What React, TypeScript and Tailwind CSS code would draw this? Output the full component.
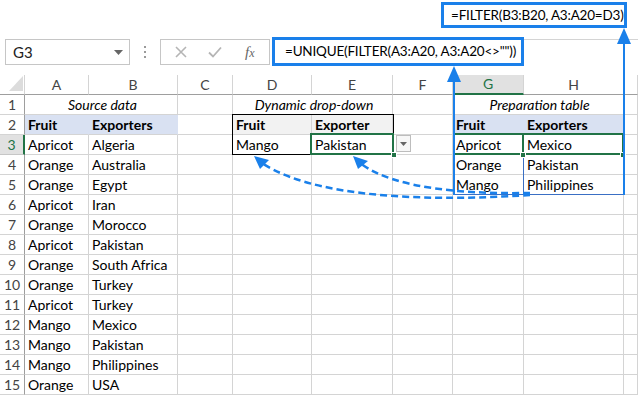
import React from "react";

const FONT = { fontFamily: "Lato, 'Open Sans', sans-serif" };

const COLS =
  "grid grid-cols-[25px_64px_89px_55px_79px_81px_60px_71px_100px_14px]";

type Row = { n: number; a?: string; b?: string; d?: string; e?: string; g?: string; h?: string };

const rows: Row[] = [
  { n: 3, a: "Apricot", b: "Algeria", d: "Mango", e: "Pakistan", g: "Apricot", h: "Mexico" },
  { n: 4, a: "Orange", b: "Australia", g: "Orange", h: "Pakistan" },
  { n: 5, a: "Orange", b: "Egypt", g: "Mango", h: "Philippines" },
  { n: 6, a: "Apricot", b: "Iran" },
  { n: 7, a: "Orange", b: "Morocco" },
  { n: 8, a: "Apricot", b: "Pakistan" },
  { n: 9, a: "Orange", b: "South Africa" },
  { n: 10, a: "Orange", b: "Turkey" },
  { n: 11, a: "Apricot", b: "Turkey" },
  { n: 12, a: "Mango", b: "Mexico" },
  { n: 13, a: "Mango", b: "Pakistan" },
  { n: 14, a: "Mango", b: "Philippines" },
  { n: 15, a: "Orange", b: "USA" },
];

function Cell({ children, className = "" }: { children?: React.ReactNode; className?: string }) {
  return (
    <div
      className={`flex items-center h-5 pl-[3px] pt-[1px] border-r border-b border-[#d4d4d4] text-[14px] text-black whitespace-nowrap overflow-visible leading-none ${className}`}
    >
      {children}
    </div>
  );
}

function RowHead({ n, active = false }: { n: number; active?: boolean }) {
  return (
    <div
      className={`flex items-center justify-center h-5 border-b border-r text-[14px] leading-none ${
        active
          ? "bg-[#e1e1e1] text-[#217346] border-r-2 border-r-[#217346] border-b-[#c6c6c6]"
          : "text-[#444] border-b-[#d4d4d4] border-r-[#9e9e9e]"
      }`}
    >
      {n}
    </div>
  );
}

function ColHead({ label, active = false }: { label: string; active?: boolean }) {
  return (
    <div
      className={`flex items-center justify-center h-5 border-r border-[#d4d4d4] text-[14px] leading-none ${
        active ? "bg-[#e1e1e1] text-[#217346] border-b-2 border-b-[#217346]" : "text-[#444] border-b border-b-[#9e9e9e]"
      }`}
    >
      {label}
    </div>
  );
}

export default function App() {
  return (
    <div className="relative w-[638px] h-[395px] bg-white overflow-hidden" style={FONT}>
      {/* Formula bar area */}
      <div className="h-[39px]" />
      <div className="flex h-[26px] items-stretch">
        <div className="ml-[5px] w-[125px] border border-[#c6c6c6] flex items-center justify-between pl-[7px] pr-[6px] text-[15px] text-[#222]">
          <span>G3</span>
          <svg width="9" height="5" viewBox="0 0 9 5">
            <path d="M0 0 H9 L4.5 5 Z" fill="#666" />
          </svg>
        </div>
        <div className="w-[30px] flex flex-col items-center justify-center gap-[3px]">
          <span className="w-[2px] h-[2px] bg-[#9a9a9a]" />
          <span className="w-[2px] h-[2px] bg-[#9a9a9a]" />
          <span className="w-[2px] h-[2px] bg-[#9a9a9a]" />
        </div>
        <div className="w-[110px] border border-[#c6c6c6] flex items-center">
          <svg className="ml-[14px]" width="12" height="12" viewBox="0 0 12 12">
            <path d="M1 1 L11 11 M11 1 L1 11" stroke="#b5b5b5" strokeWidth="1.6" />
          </svg>
          <svg className="ml-[21px]" width="14" height="12" viewBox="0 0 14 12">
            <path d="M1 6.5 L5 10.5 L13 1.5" stroke="#b5b5b5" strokeWidth="1.8" fill="none" />
          </svg>
          <span
            className="ml-[23px] text-[15px] italic text-[#666] leading-none"
            style={{ fontFamily: "'Liberation Serif', serif" }}
          >
            f<span className="text-[12px]">x</span>
          </span>
        </div>
        <div className="flex-1 ml-[3px] flex flex-col">
          <div className="h-0 border-t border-[#d4d4d4] ml-[250px]" />
        </div>
      </div>
      <div className="h-[10px]" />

      {/* Column headers */}
      <div className={COLS}>
        <div className="relative h-5 border-r border-b border-[#9e9e9e] border-r-[#d4d4d4]">
          <svg className="absolute left-[9px] top-[1px]" width="14" height="15" viewBox="0 0 14 15">
            <path d="M14 0 V15 H0 Z" fill="#dcdcdc" />
          </svg>
        </div>
        <ColHead label="A" />
        <ColHead label="B" />
        <ColHead label="C" />
        <ColHead label="D" />
        <ColHead label="E" />
        <ColHead label="F" />
        <ColHead label="G" active />
        <ColHead label="H" />
        <ColHead label="" />
      </div>

      {/* Row 1 */}
      <div className={COLS}>
        <RowHead n={1} />
        <Cell className="col-span-2 justify-center pl-0 italic">Source data</Cell>
        <Cell />
        <Cell className="col-span-2 justify-center pl-0 italic">Dynamic drop-down</Cell>
        <Cell />
        <Cell className="col-span-2 justify-center pl-0 italic">Preparation table</Cell>
        <Cell />
      </div>

      {/* Row 2 */}
      <div className={COLS}>
        <RowHead n={2} />
        <Cell className="bg-[#d9e1f2] border-r-[#d9e1f2] font-bold">Fruit</Cell>
        <Cell className="bg-[#d9e1f2] border-r-[#d9e1f2] font-bold">Exporters</Cell>
        <Cell />
        <Cell className="bg-[#f2f2f2] font-bold">Fruit</Cell>
        <Cell className="bg-[#f2f2f2] font-bold">Exporter</Cell>
        <Cell />
        <Cell className="bg-[#d9e1f2] border-r-[#d9e1f2] font-bold">Fruit</Cell>
        <Cell className="bg-[#d9e1f2] font-bold">Exporters</Cell>
        <Cell />
      </div>

      {/* Rows 3-15 */}
      {rows.map((r) => (
        <div key={r.n} className={COLS}>
          <RowHead n={r.n} active={r.n === 3} />
          <Cell>{r.a}</Cell>
          <Cell>{r.b}</Cell>
          <Cell />
          <Cell>{r.d}</Cell>
          <Cell>{r.e}</Cell>
          <Cell />
          <Cell>{r.g}</Cell>
          <Cell>{r.h}</Cell>
          <Cell />
        </div>
      ))}

      {/* Overlays: borders & selections */}
      <div className="absolute left-[232px] top-[114px] w-[162px] h-[41px] border border-black pointer-events-none" />
      <div className="absolute left-[310px] top-[133px] w-[84px] h-[22px] border-2 border-[#217346] pointer-events-none" />
      <div className="absolute left-[391px] top-[152px] w-[6px] h-[6px] bg-[#217346] border border-white" />
      {/* dropdown button */}
      <div className="absolute left-[396px] top-[135px] w-[15px] h-[17px] border border-[#bdbdbd] bg-[#f7f7f7] flex items-center justify-center">
        <svg width="7" height="4" viewBox="0 0 7 4">
          <path d="M0 0 H7 L3.5 4 Z" fill="#666" />
        </svg>
      </div>

      {/* spill range blue border */}
      <div className="absolute left-[453px] top-[134px] w-[171px] h-[61px] border border-[#3a6fc4] pointer-events-none" />
      <div className="absolute left-[523px] top-[134px] w-px h-[61px] bg-[#3a6fc4] pointer-events-none" />
      {/* green selection G3:H3 */}
      <div className="absolute left-[453px] top-[133px] w-[171px] h-[22px] border-2 border-[#217346] pointer-events-none" />
      <div className="absolute left-[522px] top-[133px] w-[2px] h-[22px] bg-[#217346] pointer-events-none" />
      <div className="absolute left-[520px] top-[152px] w-[6px] h-[6px] bg-[#217346] border border-white" />
      <div className="absolute left-[620px] top-[152px] w-[6px] h-[6px] bg-[#217346] border border-white" />

      {/* Formula callout boxes */}
      <div className="absolute left-[272px] top-[37px] w-[252px] h-[29px] border-[3px] border-[#1a80ea] bg-white flex items-center pl-[10px] text-[13.5px] tracking-[-0.2px] text-black whitespace-nowrap">
        =UNIQUE(FILTER(A3:A20, A3:A20&lt;&gt;""))
      </div>
      <div className="absolute left-[441px] top-[2px] w-[186px] h-[26px] border-[3px] border-[#1a80ea] bg-white flex items-center pl-[7px] text-[13.5px] tracking-[-0.2px] text-black whitespace-nowrap">
        =FILTER(B3:B20, A3:A20=D3)
      </div>

      {/* Arrows */}
      <svg className="absolute left-0 top-0 pointer-events-none" width="638" height="395" viewBox="0 0 638 395">
        {/* solid vertical arrows */}
        <line x1="454" y1="195" x2="454" y2="80" stroke="#1a80ea" strokeWidth="2" />
        <path d="M454 66 L447 82 L461 82 Z" fill="#1a80ea" />
        <line x1="624" y1="195" x2="624" y2="42" stroke="#1a80ea" strokeWidth="2" />
        <path d="M624 28 L617 44 L631 44 Z" fill="#1a80ea" />

        {/* dashed arrows */}
        <path
          d="M530 195 C 470 199, 325 205, 262 163"
          stroke="#1a80ea"
          strokeWidth="2.5"
          strokeDasharray="7 4"
          fill="none"
        />
        <path d="M254 156 L269 160 L260 169 Z" fill="#1a80ea" />
        <path
          d="M530 193 C 470 194, 395 190, 360 163"
          stroke="#1a80ea"
          strokeWidth="2.5"
          strokeDasharray="7 4"
          fill="none"
        />
        <path d="M353 156 L368 161 L358 169 Z" fill="#1a80ea" />
      </svg>
    </div>
  );
}
